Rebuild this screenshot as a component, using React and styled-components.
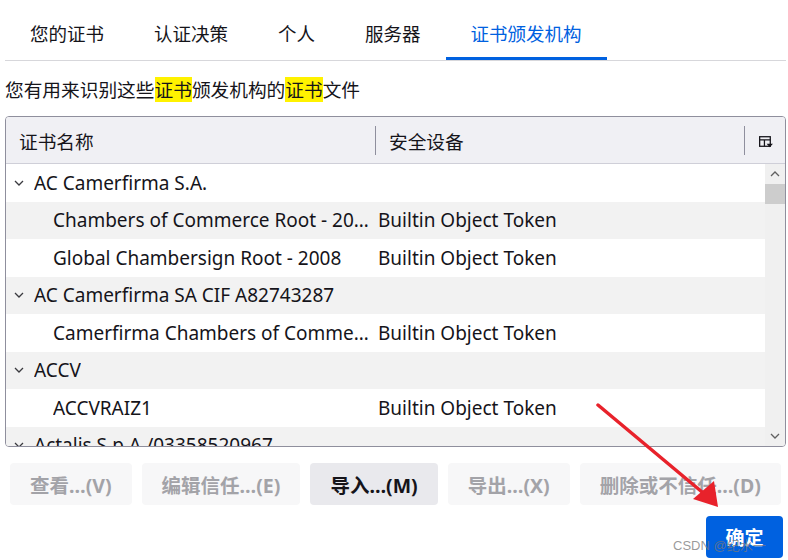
import React from 'react';
import styled, { createGlobalStyle } from 'styled-components';

const GlobalStyle = createGlobalStyle`
  body {
    margin: 0;
    background: #fff;
    font-family: "Noto Sans", "Noto Sans CJK SC", sans-serif;
    color: #15141a;
  }
`;

const tabs = ['您的证书', '认证决策', '个人', '服务器', '证书颁发机构'];

const rows = [
  { group: true, name: 'AC Camerfirma S.A.' },
  { name: 'Chambers of Commerce Root - 2008', device: 'Builtin Object Token' },
  { name: 'Global Chambersign Root - 2008', device: 'Builtin Object Token' },
  { group: true, name: 'AC Camerfirma SA CIF A82743287' },
  { name: 'Camerfirma Chambers of Commerce Root', device: 'Builtin Object Token' },
  { group: true, name: 'ACCV' },
  { name: 'ACCVRAIZ1', device: 'Builtin Object Token' },
  { group: true, name: 'Actalis S.p.A./03358520967' },
];

const buttons = [
  { label: '查看…(V)', disabled: true },
  { label: '编辑信任…(E)', disabled: true },
  { label: '导入…(M)' },
  { label: '导出…(X)', disabled: true },
  { label: '删除或不信任…(D)', disabled: true },
];

const Chevron = ({ up }) => (
  <svg width="10" height="10" viewBox="0 0 10 10">
    <path d={up ? 'M1 7 L5 3 L9 7' : 'M1 3 L5 7 L9 3'} fill="none" stroke="currentColor" strokeWidth="1.3" />
  </svg>
);

const ColumnsIcon = () => (
  <svg width="17" height="17" viewBox="0 0 16 16">
    <rect x="2.5" y="3.5" width="10" height="9" fill="none" stroke="#15141a" strokeWidth="1.2" />
    <path d="M2.5 6.5 H12.5 M7 6.5 V12.5" stroke="#15141a" strokeWidth="1.2" />
    <path d="M9 10 H15 L12 13.5 Z" fill="#15141a" />
  </svg>
);

const App = () => {
  return (
    <Page>
      <GlobalStyle />
      <TabBar>
        {tabs.map((t, i) => (
          <Tab key={t} active={i === tabs.length - 1}>{t}</Tab>
        ))}
      </TabBar>
      <Description>
        您有用来识别这些<Mark>证书</Mark>颁发机构的<Mark>证书</Mark>文件
      </Description>
      <Table>
        <Header>
          <HeadCell width="369px">证书名称</HeadCell>
          <HeadCell width="370px" divider>安全设备</HeadCell>
          <PickerCell><ColumnsIcon /></PickerCell>
        </Header>
        <Body>
          <Rows>
            {rows.map((r, i) => (
              <Row key={i} odd={i % 2 === 1}>
                <NameCell group={r.group}>
                  {r.group && <Twisty><Chevron /></Twisty>}
                  <Ellipsis>{r.name}</Ellipsis>
                </NameCell>
                <DeviceCell>{r.device}</DeviceCell>
              </Row>
            ))}
          </Rows>
          <Scrollbar>
            <ScrollArrow><Chevron up /></ScrollArrow>
            <Thumb />
            <Track />
            <ScrollArrow><Chevron /></ScrollArrow>
          </Scrollbar>
        </Body>
      </Table>
      <ButtonRow>
        {buttons.map((b) => (
          <ActionButton key={b.label} disabled={b.disabled}>{b.label}</ActionButton>
        ))}
      </ButtonRow>
      <Footer>
        <PrimaryButton>确定</PrimaryButton>
      </Footer>
      <Arrow width="140" height="120" viewBox="0 0 140 120">
        <path d="M2 2 L112 94" stroke="#e8222b" strokeWidth="3.5" strokeLinecap="round" />
        <path d="M97 96 L122 104 L118 78 Z" fill="#e8222b" />
      </Arrow>
      <Watermark>CSDN @纪水一</Watermark>
    </Page>
  );
};

export default App;

const Page = styled.div`
  position: relative;
  width: 788px;
  height: 560px;
  overflow: hidden;
  box-sizing: border-box;
  padding: 0 2px 0 5px;
`;

const TabBar = styled.div`
  display: flex;
  border-bottom: 1px solid #d7d7db;
`;

const Tab = styled.div`
  height: 60px;
  box-sizing: border-box;
  padding: 8px 25px 0;
  display: flex;
  align-items: center;
  font-size: 18.5px;
  color: ${(p) => (p.active ? '#0061e0' : '#15141a')};
  border-bottom: 3px solid ${(p) => (p.active ? '#0061e0' : 'transparent')};
`;

const Description = styled.div`
  font-size: 18.7px;
  line-height: 24px;
  padding-top: 17px;
  margin-bottom: 14px;
`;

const Mark = styled.span`
  background: #fff200;
`;

const Table = styled.div`
  height: 331px;
  box-sizing: border-box;
  border: 1px solid #8f8f9d;
  border-radius: 4px;
  overflow: hidden;
  display: flex;
  flex-direction: column;
`;

const Header = styled.div`
  height: 47px;
  flex: none;
  box-sizing: border-box;
  display: flex;
  align-items: center;
  background: #f0f0f4;
  border-bottom: 1px solid #cfcfd8;
`;

const HeadCell = styled.div`
  width: ${(p) => p.width};
  box-sizing: border-box;
  padding-left: 13px;
  font-size: 18.7px;
  height: 29px;
  display: flex;
  align-items: center;
  border-left: ${(p) => (p.divider ? '1px solid #8f8f9d' : 'none')};
  border-right: ${(p) => (p.divider ? '1px solid #8f8f9d' : 'none')};
`;

const PickerCell = styled.div`
  flex: 1;
  display: flex;
  justify-content: center;
  align-items: center;
  padding-top: 2px;
`;

const Body = styled.div`
  flex: 1;
  display: flex;
  overflow: hidden;
`;

const Rows = styled.div`
  flex: 1;
  overflow: hidden;
`;

const Row = styled.div`
  height: 37.5px;
  display: flex;
  align-items: center;
  font-size: 19px;
  background: ${(p) => (p.odd ? '#f2f2f2' : '#fff')};
`;

const NameCell = styled.div`
  width: 369px;
  box-sizing: border-box;
  display: flex;
  align-items: center;
  padding-left: ${(p) => (p.group ? '8px' : '47px')};
  padding-right: 6px;
  overflow: hidden;
`;

const Twisty = styled.span`
  display: flex;
  width: 20px;
  color: #3a3a3f;
  flex: none;
`;

const Ellipsis = styled.span`
  white-space: nowrap;
  overflow: hidden;
  text-overflow: ellipsis;
`;

const DeviceCell = styled.div`
  padding-left: 3px;
  white-space: nowrap;
`;

const Scrollbar = styled.div`
  width: 20px;
  flex: none;
  display: flex;
  flex-direction: column;
  background: #f0f0f0;
`;

const ScrollArrow = styled.div`
  height: 20px;
  display: flex;
  align-items: center;
  justify-content: center;
  color: #606060;
`;

const Thumb = styled.div`
  height: 20px;
  background: #cdcdcd;
`;

const Track = styled.div`
  flex: 1;
`;

const ButtonRow = styled.div`
  display: flex;
  gap: 10px;
  margin: 16px 0 0 5px;
`;

const ActionButton = styled.button`
  height: 42px;
  padding: 0 20px;
  border: none;
  border-radius: 4px;
  font-family: "Noto Sans", "Noto Sans CJK SC", sans-serif;
  font-size: 19.5px;
  font-weight: 700;
  white-space: nowrap;
  background: ${(p) => (p.disabled ? '#f7f7f8' : '#e9e9ed')};
  color: ${(p) => (p.disabled ? '#a3a3a8' : '#15141a')};
`;

const Footer = styled.div`
  display: flex;
  justify-content: flex-end;
  margin: 11px 3px 0 0;
`;

const PrimaryButton = styled.button`
  width: 77px;
  height: 42px;
  border: none;
  border-radius: 4px;
  background: #0061e0;
  color: #fff;
  font-family: "Noto Sans", "Noto Sans CJK SC", sans-serif;
  font-size: 19px;
  font-weight: 700;
`;

const Arrow = styled.svg`
  position: absolute;
  left: 596px;
  top: 403px;
  pointer-events: none;
`;

const Watermark = styled.div`
  position: absolute;
  left: 673px;
  top: 535px;
  font-family: "Liberation Sans", "Noto Sans CJK SC", sans-serif;
  font-size: 13px;
  color: rgba(120, 120, 120, 0.75);
  pointer-events: none;
`;
